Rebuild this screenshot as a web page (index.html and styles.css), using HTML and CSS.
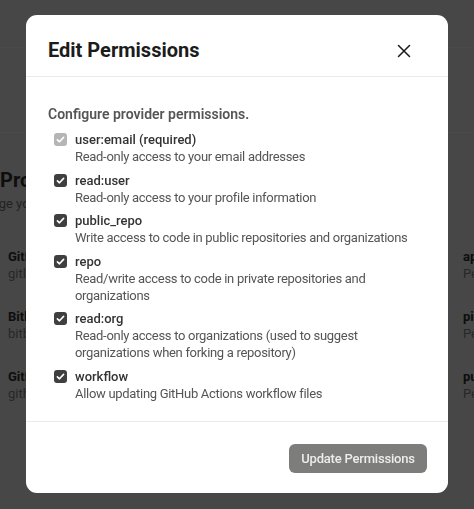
FILE: index.html
```html
<!DOCTYPE html>
<html lang="en">
<head>
<meta charset="utf-8">
<title>Edit Permissions</title>
<link rel="stylesheet" href="styles.css">
</head>
<body>
<div class="page">
  <div class="topbar"></div>
  <div class="subbar"></div>
  <div class="section">
    <h1 class="page-title">Providers</h1>
    <p class="page-sub">Manage your connected providers</p>
    <div class="providers">
      <div class="prov-row">
        <div class="prov"><div class="prov-name">GitLab</div><div class="prov-host">gitlab.com</div></div>
        <div class="prov-scope"><div class="prov-name">api</div><div class="prov-host">Permissions</div></div>
      </div>
      <div class="prov-row">
        <div class="prov"><div class="prov-name">Bitbucket</div><div class="prov-host">bitbucket.org</div></div>
        <div class="prov-scope"><div class="prov-name">pipelines</div><div class="prov-host">Permissions</div></div>
      </div>
      <div class="prov-row">
        <div class="prov"><div class="prov-name">GitHub</div><div class="prov-host">github.com</div></div>
        <div class="prov-scope"><div class="prov-name">public_repo</div><div class="prov-host">Permissions</div></div>
      </div>
    </div>
  </div>
</div>
<div class="backdrop"></div>
<div class="modal" role="dialog">
  <div class="modal-header">
    <h2 class="modal-title">Edit Permissions</h2>
    <button class="close" aria-label="Close">
      <svg width="14" height="14" viewBox="0 0 14 14"><path d="M1.5 1.5 L12.5 12.5 M12.5 1.5 L1.5 12.5" stroke="#1a1a1a" stroke-width="1.5" stroke-linecap="round" fill="none"/></svg>
    </button>
  </div>
  <div class="modal-body">
    <p class="intro">Configure provider permissions.</p>
    <ul class="perms">
      <li class="perm">
        <span class="cb cb-disabled"><svg viewBox="0 0 13 13"><path d="M3.4 6.8 L5.5 8.8 L9.6 4.4" /></svg></span>
        <div class="perm-text"><div class="perm-name">user:email (required)</div><div class="perm-desc">Read-only access to your email addresses</div></div>
      </li>
      <li class="perm">
        <span class="cb"><svg viewBox="0 0 13 13"><path d="M3.4 6.8 L5.5 8.8 L9.6 4.4" /></svg></span>
        <div class="perm-text"><div class="perm-name">read:user</div><div class="perm-desc">Read-only access to your profile information</div></div>
      </li>
      <li class="perm">
        <span class="cb"><svg viewBox="0 0 13 13"><path d="M3.4 6.8 L5.5 8.8 L9.6 4.4" /></svg></span>
        <div class="perm-text"><div class="perm-name">public_repo</div><div class="perm-desc">Write access to code in public repositories and organizations</div></div>
      </li>
      <li class="perm">
        <span class="cb"><svg viewBox="0 0 13 13"><path d="M3.4 6.8 L5.5 8.8 L9.6 4.4" /></svg></span>
        <div class="perm-text"><div class="perm-name">repo</div><div class="perm-desc">Read/write access to code in private repositories and organizations</div></div>
      </li>
      <li class="perm">
        <span class="cb"><svg viewBox="0 0 13 13"><path d="M3.4 6.8 L5.5 8.8 L9.6 4.4" /></svg></span>
        <div class="perm-text"><div class="perm-name">read:org</div><div class="perm-desc">Read-only access to organizations (used to suggest organizations when forking a repository)</div></div>
      </li>
      <li class="perm">
        <span class="cb"><svg viewBox="0 0 13 13"><path d="M3.4 6.8 L5.5 8.8 L9.6 4.4" /></svg></span>
        <div class="perm-text"><div class="perm-name">workflow</div><div class="perm-desc">Allow updating GitHub Actions workflow files</div></div>
      </li>
    </ul>
  </div>
  <div class="modal-footer">
    <button class="btn-update">Update Permissions</button>
  </div>
</div>
</body>
</html>
```

FILE: styles.css
```css
* { box-sizing: border-box; }
html, body {
  margin: 0;
  padding: 0;
  width: 474px;
  height: 509px;
  overflow: hidden;
}
body {
  font-family: Roboto, "Liberation Sans", sans-serif;
  background: #f3f3f3;
  color: #222;
}

/* background page */
.page { width: 474px; height: 509px; }
.topbar { height: 48px; border-bottom: 1px solid #ffffff; }
.subbar { height: 85px; border-bottom: 1px solid #ffffff; }
.page-title {
  margin: 33px 0 0 0;
  font-size: 20px;
  line-height: 28px;
  font-weight: 700;
  color: #333;
}
.page-sub {
  margin: 0;
  font-size: 13px;
  line-height: 20px;
  color: #777;
  text-indent: -34px;
  white-space: nowrap;
}
.providers { margin-top: 34px; display: flex; flex-direction: column; gap: 25px; }
.prov-row { display: flex; justify-content: space-between; height: 35px; }
.prov { padding-left: 8px; }
.prov-scope { width: 11px; overflow: hidden; white-space: nowrap; }
.prov-name { font-size: 13px; font-weight: 700; line-height: 17px; color: #333; }
.prov-host { font-size: 13px; line-height: 18px; color: #888; }

.backdrop {
  position: fixed;
  inset: 0;
  background: rgba(0, 0, 0, 0.71);
}

/* modal */
.modal {
  position: absolute;
  left: 26px;
  top: 15px;
  width: 422px;
  height: 478px;
  background: #ffffff;
  border-radius: 11px;
  display: flex;
  flex-direction: column;
}
.modal-header {
  height: 62px;
  border-bottom: 1px solid #e9e9e9;
  display: flex;
  align-items: center;
  justify-content: space-between;
  padding: 9px 32px 0 22px;
}
.modal-title {
  margin: 0;
  font-size: 20px;
  font-weight: 700;
  color: #1c1c1c;
}
.close {
  width: 24px;
  height: 24px;
  border: 0;
  background: none;
  padding: 0;
  display: flex;
  align-items: center;
  justify-content: center;
  margin-top: 1px;
}
.modal-body {
  flex: 1;
  padding: 27px 22px 0 22px;
}
.intro {
  margin: 0 0 7px 0;
  font-size: 14px;
  line-height: 20px;
  font-weight: 600;
  color: #555;
}
.perms {
  list-style: none;
  margin: 0;
  padding: 0 0 0 6px;
  display: flex;
  flex-direction: column;
  gap: 6.5px;
}
.perm { display: flex; align-items: flex-start; gap: 8px; }
.cb {
  flex: none;
  width: 13px;
  height: 13px;
  margin-top: 2px;
  border-radius: 3px;
  background: #3f3f3f;
  display: flex;
}
.cb svg { width: 13px; height: 13px; }
.cb path { stroke: #fff; stroke-width: 1.6; fill: none; stroke-linecap: round; stroke-linejoin: round; }
.cb-disabled { background: #b5b5b5; }
.perm-text { font-size: 13px; line-height: 17px; }
.perm-name { font-weight: 500; color: #333; }
.perm-desc { color: #555; letter-spacing: -0.3px; }

.modal-footer {
  height: 72px;
  border-top: 1px solid #ececec;
  display: flex;
  align-items: center;
  justify-content: flex-end;
  padding: 0 21px 0 22px;
}
.btn-update {
  width: 138px;
  height: 29px;
  border: 0;
  border-radius: 6px;
  background: #7d7d7b;
  color: #ededed;
  font-family: inherit;
  font-size: 13px;
  font-weight: 500;
  letter-spacing: -0.2px;
  padding: 0;
  margin-top: 1px;
}
```
